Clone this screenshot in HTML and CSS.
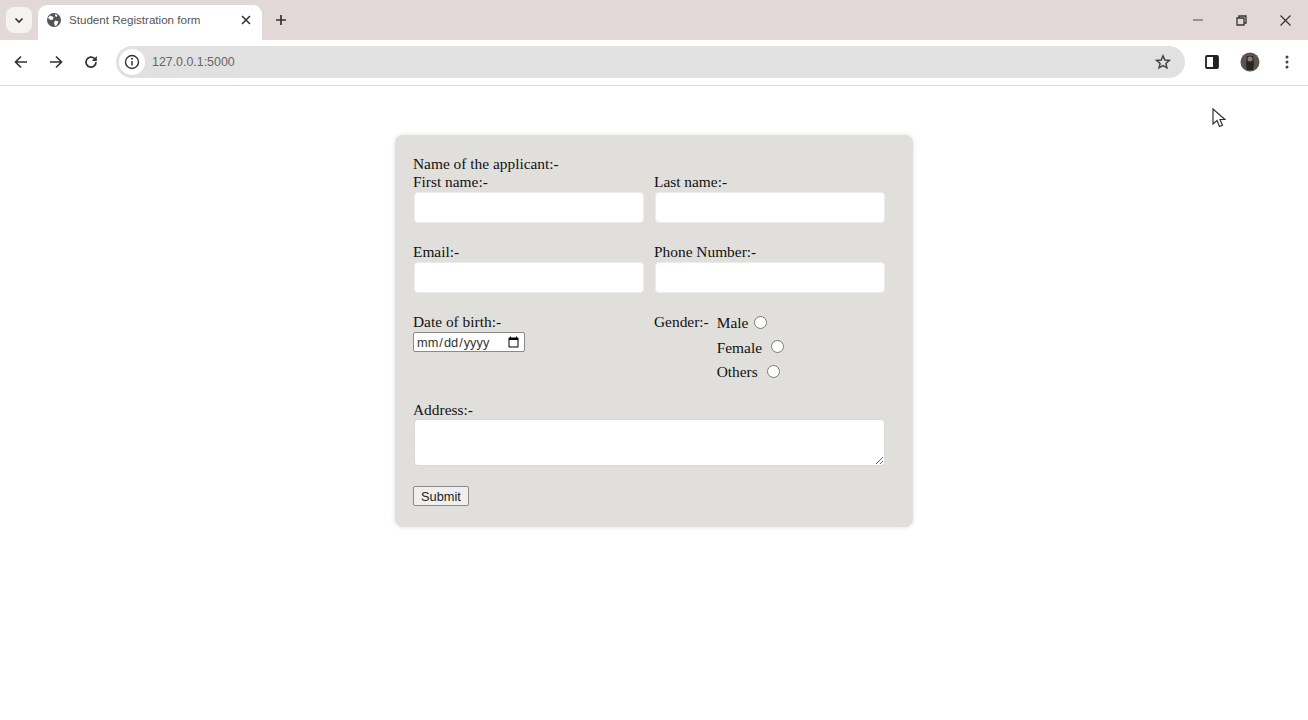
FILE: index.html
```html
<!DOCTYPE html>
<html lang="en">
    <head>
        <title>Student Registration form</title>
        <meta charset="utf-8">
        <meta name="viewport" content="width=device-width, initial-scale=1">
        <link rel="stylesheet" href="styles.css">
    </head>
    <body>
        <!-- browser tab strip -->
        <div class="tabstrip">
            <div class="tab-list">
                <svg width="12" height="12" viewBox="0 0 12 12"><path d="M2.5 4.5 6 8l3.5-3.5" fill="none" stroke="#333" stroke-width="1.7"/></svg>
            </div>
            <div class="tab">
                <svg width="14" height="14" viewBox="0 0 14 14"><circle cx="7" cy="7" r="7" fill="#555"/><path d="M3 2.5 6.5 4 6 6.5 3.5 7 1 5zM8 7.5l3.5 1L10 12 8 13 7 10zM8.5 1l2 1.500L9.500 4 8 3z" fill="#fff"/></svg>
                <span class="tab-title">Student Registration form</span>
                <svg width="10" height="10" viewBox="0 0 10 10"><path d="M1 1l8 8M9 1 1 9" stroke="#333" stroke-width="1.6"/></svg>
            </div>
            <div class="new-tab">
                <svg width="12" height="12" viewBox="0 0 12 12"><path d="M6 1v10M1 6h10" stroke="#333" stroke-width="1.7"/></svg>
            </div>
            <div class="window-controls">
                <svg width="10" height="10" viewBox="0 0 10 10"><path d="M0 5h10" stroke="#666" stroke-width="1.2"/></svg>
                <svg width="11" height="11" viewBox="0 0 11 11"><path d="M1 3h7v7H1zM3 3V1h7v7H8" fill="none" stroke="#333" stroke-width="1.3"/></svg>
                <svg width="11" height="11" viewBox="0 0 11 11"><path d="M.5.500l10 10M10.500.500l-10 10" stroke="#333" stroke-width="1.2"/></svg>
            </div>
        </div>

        <!-- browser toolbar -->
        <div class="toolbar">
            <div class="nav-buttons">
                <svg width="14" height="14" viewBox="0 0 14 14"><path d="M13 7H2M7 1.500 1.500 7 7 12.500" fill="none" stroke="#333" stroke-width="1.7"/></svg>
                <svg width="14" height="14" viewBox="0 0 14 14"><path d="M1 7h11M7 1.500 12.500 7 7 12.500" fill="none" stroke="#333" stroke-width="1.7"/></svg>
                <svg width="14" height="14" viewBox="0 0 14 14"><path d="M12 7a5 5 0 1 1-1.500-3.500L12 5" fill="none" stroke="#333" stroke-width="1.7"/><path d="M12.800 1v5h-5z" fill="#333"/></svg>
            </div>
            <div class="address-bar">
                <span class="site-info">
                    <svg width="16" height="16" viewBox="0 0 16 16"><circle cx="8" cy="8" r="6.500" fill="none" stroke="#333" stroke-width="1.400"/><path d="M8 7v4.500" stroke="#333" stroke-width="1.500"/><circle cx="8" cy="4.800" r="1" fill="#333"/></svg>
                </span>
                <span class="url">127.0.0.1:5000</span>
                <svg class="star" width="16" height="16" viewBox="0 0 16 16"><path d="M8 1.800 9.800 6l4.500.400-3.400 3 1 4.400L8 11.500l-3.900 2.300 1-4.400-3.400-3L6.200 6z" fill="none" stroke="#444" stroke-width="1.500"/></svg>
            </div>
            <div class="toolbar-icons">
                <svg width="14" height="14" viewBox="0 0 14 14"><rect x="1" y="1" width="12" height="12" rx="1" fill="none" stroke="#222" stroke-width="1.800"/><rect x="8" y="1" width="5" height="12" fill="#222"/></svg>
                <svg width="20" height="20" viewBox="0 0 20 20"><circle cx="10" cy="10" r="9.500" fill="#5a5350"/><path d="M7 4h6l1 8-1 6H7l-1-6z" fill="#2a2522"/><circle cx="10" cy="7" r="2.500" fill="#8d7f78"/></svg>
                <svg class="menu-dots" width="4" height="14" viewBox="0 0 4 14"><circle cx="2" cy="2" r="1.500" fill="#444"/><circle cx="2" cy="7" r="1.500" fill="#444"/><circle cx="2" cy="12" r="1.500" fill="#444"/></svg>
            </div>
        </div>

        <div class="page">
            <svg class="cursor" width="14" height="21" viewBox="0 0 14 21"><path d="M1 1v15l4-3.500 2.500 6 3-1.300L8 11.500h5z" fill="#fff" stroke="#333" stroke-width="1.200"/></svg>

            <form class="reg-form">
                <div class="heading">Name of the applicant:-</div>
                <div class="form-row">
                    <div class="field">
                        <label>First name:-</label>
                        <input type="text" class="text-input">
                    </div>
                    <div class="field">
                        <label>Last name:-</label>
                        <input type="text" class="text-input">
                    </div>
                </div>
                <div class="form-row">
                    <div class="field">
                        <label>Email:-</label>
                        <input type="text" class="text-input">
                    </div>
                    <div class="field">
                        <label>Phone Number:-</label>
                        <input type="text" class="text-input">
                    </div>
                </div>
                <div class="form-row dob-row">
                    <div class="field">
                        <label>Date of birth:-</label>
                        <input type="date" class="date-input">
                    </div>
                    <div class="gender">
                        <span class="gender-label">Gender:-</span>
                        <div class="gender-options">
                            <label class="radio-line">Male <input type="radio" name="gender"></label>
                            <label class="radio-line radio-wide">Female <input type="radio" name="gender"></label>
                            <label class="radio-line radio-wide">Others <input type="radio" name="gender"></label>
                        </div>
                    </div>
                </div>
                <div class="field address">
                    <label>Address:-</label>
                    <textarea class="address-input"></textarea>
                </div>
                <button type="button" class="submit-btn">Submit</button>
            </form>
        </div>
    </body>
</html>
```

FILE: styles.css
```css
html, body {
    margin: 0;
    padding: 0;
    height: 720px;
    overflow: hidden;
    background-color: #fff;
    font-family: "Liberation Serif", serif;
}

/* tab strip */
.tabstrip {
    display: flex;
    align-items: center;
    height: 40px;
    background-color: #e2d8d8;
}

.tab-list {
    display: flex;
    align-items: center;
    justify-content: center;
    width: 26px;
    height: 26px;
    margin-left: 6px;
    border-radius: 8px;
    background-color: #f6f2f2;
}

.tab {
    display: flex;
    align-items: center;
    width: 224px;
    height: 35px;
    margin-top: 5px;
    margin-left: 6px;
    padding: 0 11px 6px 9px;
    box-sizing: border-box;
    border-radius: 9px 9px 0 0;
    background-color: #fff;
}

.tab-title {
    flex: 1;
    margin-left: 8px;
    font-family: "Liberation Sans", sans-serif;
    font-size: 11.6px;
    color: #555;
}

.new-tab {
    display: flex;
    margin-left: 13px;
}

.window-controls {
    display: flex;
    align-items: center;
    gap: 33px;
    margin-left: auto;
    margin-right: 17px;
}

/* toolbar */
.toolbar {
    display: flex;
    align-items: center;
    height: 46px;
    padding-bottom: 1px;
    box-sizing: border-box;
    border-bottom: 1px solid #dcdcdc;
    background-color: #fff;
}

.nav-buttons {
    display: flex;
    align-items: center;
    gap: 21px;
    margin-left: 14px;
}

.address-bar {
    display: flex;
    align-items: center;
    width: 1069px;
    height: 32px;
    margin-left: 18px;
    box-sizing: border-box;
    border-radius: 16px;
    background-color: #e1e1e1;
}

.site-info {
    display: flex;
    align-items: center;
    justify-content: center;
    width: 26px;
    height: 26px;
    margin-left: 3px;
    border-radius: 50%;
    background-color: #fff;
}

.url {
    flex: 1;
    margin-left: 7px;
    font-family: "Liberation Sans", sans-serif;
    font-size: 12.4px;
    color: #666;
}

.star {
    margin-right: 14px;
}

.toolbar-icons {
    display: flex;
    align-items: center;
    gap: 21px;
    margin-left: 20px;
}

.menu-dots {
    margin-left: 4px;
}

/* page */
.page {
    position: relative;
    padding-top: 49px;
}

.cursor {
    position: absolute;
    top: 22px;
    left: 1212px;
}

.reg-form {
    width: 518px;
    height: 392px;
    margin: 0 auto;
    padding: 20px 0 0 18px;
    box-sizing: border-box;
    border-radius: 8px;
    background-color: #e1dfdc;
    box-shadow: 0 0 5px rgba(0, 0, 0, 0.12);
    font-size: 15.4px;
    line-height: 18px;
    color: #111;
}

.form-row {
    display: grid;
    grid-template-columns: 230px 230px;
    column-gap: 11px;
    margin-bottom: 20px;
}

.field label {
    display: block;
}

.text-input {
    display: block;
    width: 230px;
    height: 31px;
    margin: 1px 0 0 1px;
    box-sizing: border-box;
    border: 1px solid #ececec;
    border-radius: 4px;
    background-color: #fff;
}

.date-input {
    display: block;
    width: 112px;
    height: 20px;
    box-sizing: border-box;
    margin-top: 1px;
    padding: 0 2px;
    border: 1px solid #8a8a8a;
    border-radius: 2px;
    background-color: #fff;
    font-family: "Liberation Sans", sans-serif;
    font-size: 12.8px;
    color: #333;
}

.gender {
    display: flex;
    gap: 8px;
}

.gender-options {
    display: flex;
    flex-direction: column;
    gap: 6.500px;
    margin-top: 1px;
}

.radio-line {
    display: flex;
    align-items: center;
    gap: 5px;
    height: 18px;
}

.radio-wide {
    gap: 8px;
}

.radio-line input {
    width: 13px;
    height: 13px;
    margin: 0 0 2px 1px;
}

.address {
    width: 472px;
}

.address-input {
    display: block;
    width: 471px;
    height: 47px;
    margin-left: 1px;
    box-sizing: border-box;
    border: 1px solid #dadada;
    border-radius: 4px;
    background-color: #fff;
}

.submit-btn {
    display: block;
    width: 56px;
    height: 20px;
    margin-top: 20px;
    padding: 0;
    border: 1px solid #8a8a8a;
    border-radius: 2px;
    background-color: #efefef;
    font-family: "Liberation Sans", sans-serif;
    font-size: 12.8px;
    color: #222;
}
```
